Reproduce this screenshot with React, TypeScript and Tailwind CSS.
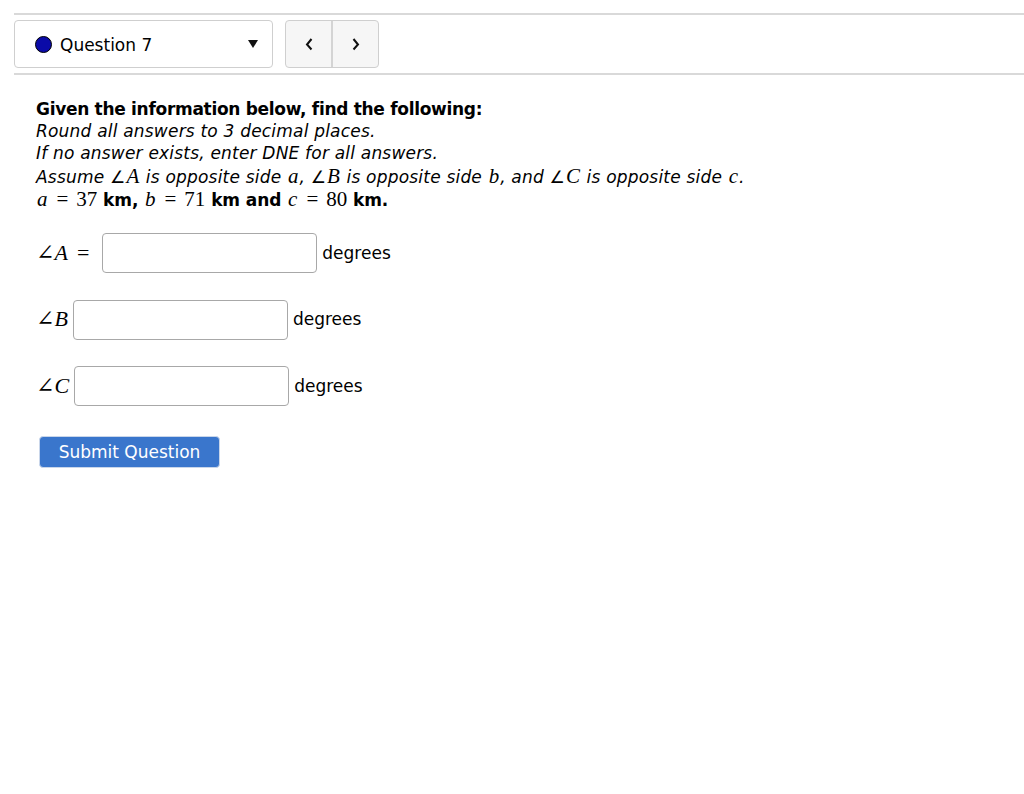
const sans = "font-['DejaVu_Sans','Verdana',sans-serif]";
const serif = "font-['Liberation_Serif','DejaVu_Serif',serif]";

function M({ children }: { children: React.ReactNode }) {
  return <span className={`${serif} mx-[1px] italic text-[21px] font-normal tracking-normal`}>{children}</span>;
}

function N({ children }: { children: React.ReactNode }) {
  return <span className={`${serif} text-[21px] font-normal tracking-normal`}>{children}</span>;
}

function Eq() {
  return <span className={`${serif} mx-[8px] text-[21px] font-normal`}>=</span>;
}

function AngleRow({ label, eq }: { label: string; eq?: boolean }) {
  return (
    <div className="flex items-center">
      <span className={`${serif} text-[22px] text-black`}>
        ∠<i>{label}</i>
        {eq && <span className="ml-[9px]">=</span>}
      </span>
      <input
        type="text"
        className={`${eq ? "ml-[13px]" : "ml-[5px]"} h-[40px] w-[215px] rounded-[4px] border border-[#a8a8a8] bg-white`}
      />
      <span className="ml-[5px] text-[17px] text-black">degrees</span>
    </div>
  );
}

export default function App() {
  return (
    <div className={`${sans} min-h-[794px] w-[1024px] bg-white text-black`}>
      <div className="pt-[13px] pl-[14px]">
        <div className="border-y-2 border-[#d9d9d9] py-[5px]">
          <div className="flex items-center gap-[12px]">
            <div className="flex h-[48px] w-[259px] items-center rounded-[4px] border border-[#cfcfcf] bg-white pl-[20px] pr-[13px]">
              <span className="h-[17px] w-[17px] rounded-full border-[1.5px] border-black bg-[#0a0aa8]" />
              <span className="ml-[8px] mt-[3px] text-[17px]">Question 7</span>
              <svg className="ml-auto" width="12" height="10" viewBox="0 0 12 10">
                <path d="M1 1h10L6 9z" fill="#111" />
              </svg>
            </div>
            <div className="flex h-[48px] w-[94px] overflow-hidden rounded-[4px] border border-[#cfcfcf] bg-[#f6f6f6]">
              <button className="flex flex-1 items-center justify-center border-r-2 border-[#d4d4d4]">
                <svg width="10" height="16" viewBox="0 0 10 16">
                  <path d="M7.5 3L3 8.5l4.5 5" fill="none" stroke="#111" strokeWidth="2" />
                </svg>
              </button>
              <button className="flex flex-1 items-center justify-center">
                <svg width="10" height="16" viewBox="0 0 10 16">
                  <path d="M2.5 3L7 8.5l-4.5 5" fill="none" stroke="#111" strokeWidth="2" />
                </svg>
              </button>
            </div>
          </div>
        </div>
      </div>

      <div className="pl-[36px] pt-[23px] text-[17px] leading-[22.2px]">
        <p className="font-bold tracking-[-0.3px]">Given the information below, find the following:</p>
        <p className="italic tracking-[0.2px]">Round all answers to 3 decimal places.</p>
        <p className="italic tracking-[0.2px]">If no answer exists, enter DNE for all answers.</p>
        <p className="italic tracking-[0.2px]">
          Assume ∠<M>A</M> is opposite side <M>a</M>, ∠<M>B</M> is opposite side <M>b</M>, and ∠<M>C</M> is opposite side <M>c</M>.
        </p>
        <p className="font-bold tracking-[-0.1px]">
          <M>a</M>
          <Eq />
          <N>37</N> km, <M>b</M>
          <Eq />
          <N>71</N> km and <M>c</M>
          <Eq />
          <N>80</N> km.
        </p>

        <div className="mt-[22px] flex flex-col gap-[26.5px]">
          <AngleRow label="A" eq />
          <AngleRow label="B" />
          <AngleRow label="C" />
        </div>

        <button className="mt-[30px] ml-[3px] h-[32px] w-[181px] rounded-[4px] border border-[#c9d6ea] bg-[#3a76cc] text-[17px] text-white">
          Submit Question
        </button>
      </div>
    </div>
  );
}
